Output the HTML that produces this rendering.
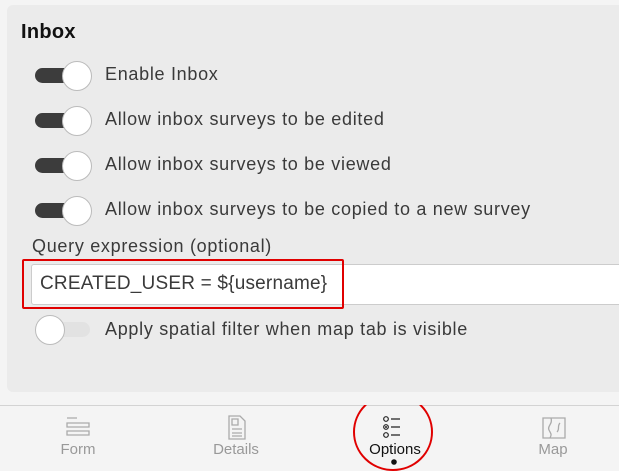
<!DOCTYPE html><html><head><style>
body{margin:0;width:619px;height:471px;background:#f4f4f4;font-family:"Liberation Sans",sans-serif;position:relative;overflow:hidden;color:#333}
.panel{position:absolute;left:7px;top:5px;width:640px;height:387px;background:#ebebeb;border-radius:6px}
.t{position:absolute;font-size:18px;color:#3a3a3a;letter-spacing:0.7px;white-space:nowrap}
.tr{position:absolute;left:35px;width:48px;height:15px;border-radius:8px;background:#3c3c3c}
.kn{position:absolute;width:28px;height:28px;border-radius:50%;background:#fff;border:1px solid #bbb}
.ft{position:absolute;top:405px;left:0;width:619px;height:1px;background:#d3d3d3}
.lb{position:absolute;top:441px;font-size:15px;color:#999;transform:translateX(-50%)}
</style></head><body>
<div class="panel"></div>
<div class="t" style="left:21px;top:21px;font-weight:bold;font-size:20px;color:#111;letter-spacing:0.3px">Inbox</div>
<div class="tr" style="top:68px"></div><div class="kn" style="left:62px;top:61px"></div><div class="t" style="left:105px;top:64px">Enable Inbox</div>
<div class="tr" style="top:113px"></div><div class="kn" style="left:62px;top:106px"></div><div class="t" style="left:105px;top:109px">Allow inbox surveys to be edited</div>
<div class="tr" style="top:158px"></div><div class="kn" style="left:62px;top:151px"></div><div class="t" style="left:105px;top:154px">Allow inbox surveys to be viewed</div>
<div class="tr" style="top:203px"></div><div class="kn" style="left:62px;top:196px"></div><div class="t" style="left:105px;top:199px">Allow inbox surveys to be copied to a new survey</div>
<div class="t" style="left:32px;top:236px">Query expression (optional)</div>
<div style="position:absolute;left:31px;top:264px;width:600px;height:39px;background:#fff;border:1px solid #ccc;border-radius:3px"></div>
<div style="position:absolute;left:22px;top:259px;width:318px;height:46px;border:2px solid #e00000;border-radius:2px"></div>
<div class="t" style="left:40px;top:273px;font-size:19px;letter-spacing:0.2px">CREATED_USER = ${username}</div>
<div class="tr" style="top:322px;left:37px;width:53px;background:#e2e2e2"></div><div class="kn" style="left:35px;top:315px"></div><div class="t" style="left:105px;top:319px">Apply spatial filter when map tab is visible</div>
<div class="ft"></div>
<svg style="position:absolute;left:0;top:405px" width="619" height="66">
<g fill="none" stroke="#aaa" stroke-width="1.3">
<path d="M67 13h10M67 18h22v4H67zM67 26h22v4H67z"/>
<path d="M229 11h11l5 5v18h-16zM232 14h6v6h-6zM232 24h10M232 28h10M232 31h10"/>
<path d="M543 13h22v20h-22zM551 13c2 6-4 8-2 12s3 4 1 8M560 18c-3 3 0 6-3 9"/>
</g>
<g fill="none" stroke="#222" stroke-width="1.2">
<circle cx="386" cy="14" r="2.3"/><circle cx="386" cy="22" r="2.3"/><circle cx="386" cy="30" r="2.3"/>
<path d="M391 14h9M391 22h9M391 30h9"/></g>
<circle cx="386" cy="22" r="1" fill="#222"/>
<circle cx="394" cy="57" r="2.8" fill="#111"/>
<ellipse cx="393" cy="27" rx="39" ry="38" fill="none" stroke="#e00000" stroke-width="2"/>
</svg>
<div class="lb" style="left:78px">Form</div>
<div class="lb" style="left:236px">Details</div>
<div class="lb" style="left:395px;color:#111">Options</div>
<div class="lb" style="left:553px">Map</div>
</body></html>
